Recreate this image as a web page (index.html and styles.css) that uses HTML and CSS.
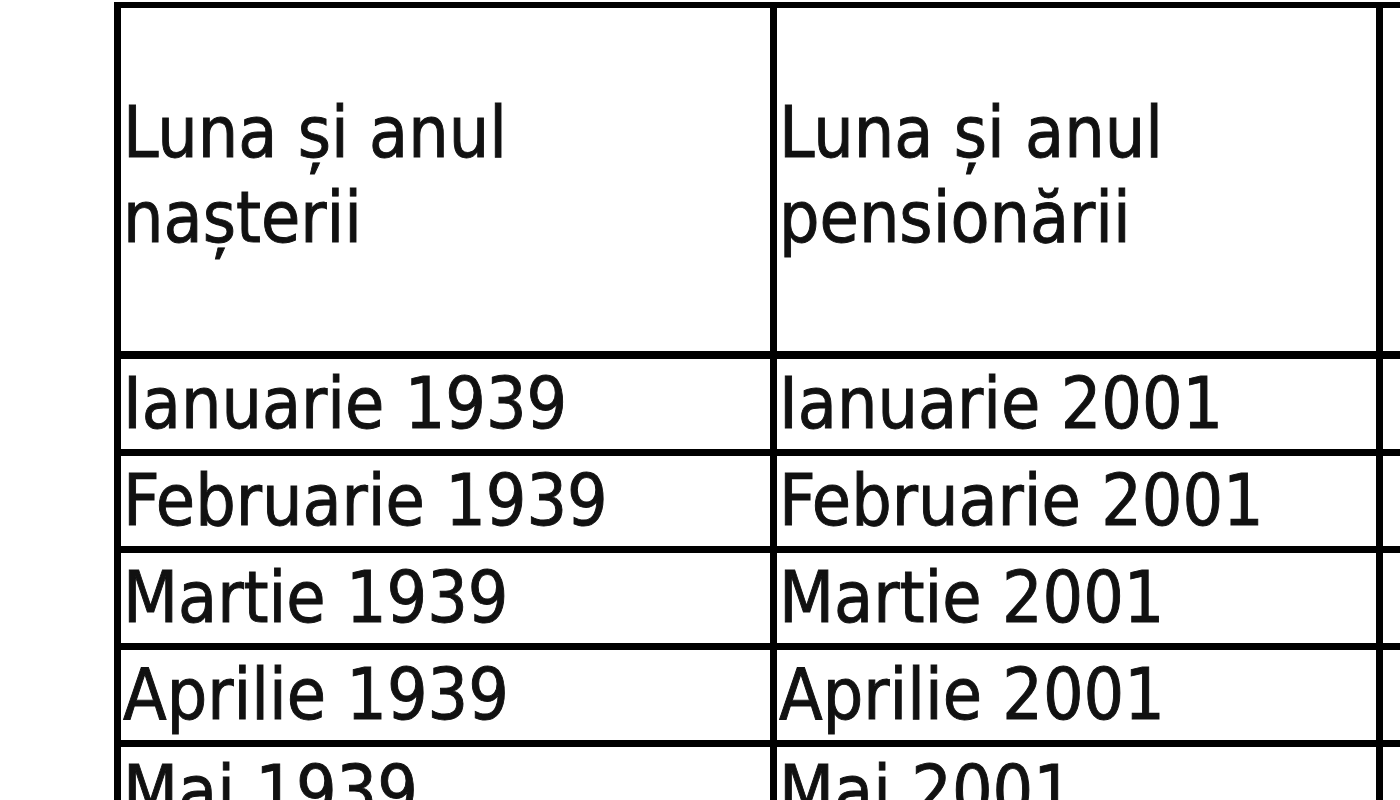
FILE: index.html
```html
<!DOCTYPE html>
<html lang="ro">
<head>
<meta charset="utf-8">
<title>Tabel pensionare</title>
<link rel="stylesheet" href="styles.css">
</head>
<body>
<table class="grid">
  <colgroup>
    <col class="c1">
    <col class="c2">
    <col class="c3">
  </colgroup>
  <thead>
    <tr class="head">
      <th>Luna și anul<br>nașterii</th>
      <th>Luna și anul<br>pensionării</th>
      <th></th>
    </tr>
  </thead>
  <tbody>
    <tr><td>Ianuarie 1939</td><td>Ianuarie 2001</td><td></td></tr>
    <tr><td>Februarie 1939</td><td>Februarie 2001</td><td></td></tr>
    <tr><td>Martie 1939</td><td>Martie 2001</td><td></td></tr>
    <tr><td>Aprilie 1939</td><td>Aprilie 2001</td><td></td></tr>
    <tr><td>Mai 1939</td><td>Mai 2001</td><td></td></tr>
  </tbody>
</table>
</body>
</html>
```

FILE: styles.css
```css
html, body {
  margin: 0;
  padding: 0;
  background: #ffffff;
  overflow: hidden;
}

.grid {
  margin: 2px 0 0 114px;
  border-collapse: separate;
  border-spacing: 0;
  table-layout: fixed;
  width: 1900px;
  border-top: 6px solid #000;
  border-left: 7px solid #000;
  font-family: "DejaVu Sans Condensed", "DejaVu Sans", sans-serif;
  font-stretch: semi-condensed;
  font-size: 71px;
  color: #111;
  -webkit-text-stroke: 0.9px #111;
  filter: blur(0.6px);
}

.c1 { width: 656px; }
.c2 { width: 606px; }
.c3 { width: 638px; }

.grid th,
.grid td {
  border-right: 7px solid #000;
  border-bottom: 7px solid #000;
  padding: 0 0 0 2px;
  text-align: left;
  vertical-align: middle;
  font-weight: normal;
  white-space: nowrap;
  overflow: hidden;
}

.head th {
  height: 334px;
  padding-bottom: 9px;
  line-height: 85px;
  border-bottom-width: 8px;
}

.grid td {
  height: 90px;
  line-height: 84px;
}
```
